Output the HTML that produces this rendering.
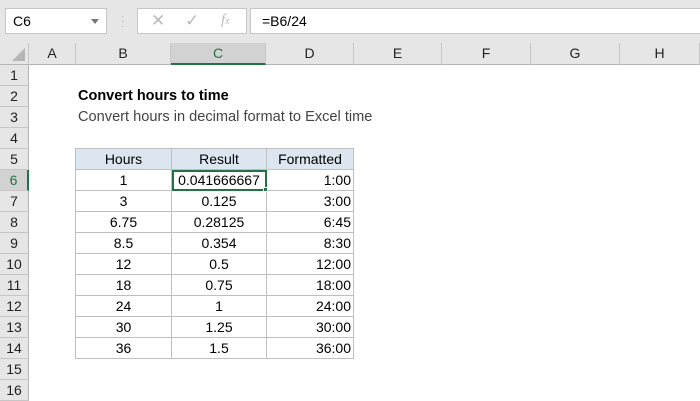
<!DOCTYPE html>
<html><head><style>
*{margin:0;padding:0;box-sizing:border-box}
body{width:700px;height:400px;overflow:hidden;background:#fff;font-family:"Liberation Sans",sans-serif;font-size:13px;color:#000;position:relative}
.tb{position:absolute;left:0;top:0;width:700px;height:43px;background:#e6e6e6}
.box{position:absolute;background:#fff;border:1px solid #c6c6c6}
.ch{position:absolute;top:43px;height:22px;background:#e6e6e6;border-right:1px solid #c6c6c6;border-bottom:1px solid #b5b5b5;text-align:center;line-height:21px;font-size:14px;color:#222}
.rh{position:absolute;left:0;width:29px;height:21px;background:#e6e6e6;border-bottom:1px solid #c6c6c6;border-right:1px solid #b5b5b5;text-align:center;line-height:21px;font-size:14px;color:#222}
table{position:absolute;left:75px;top:148px;border-collapse:collapse}
td{border:1px solid #bfbfbf;height:21px;padding:0 2px;font-size:14px;line-height:19px;text-align:center}
td.r{text-align:right}
tr.h td{background:#dce6f1}
</style></head><body>
<div class="tb">
<div class="box" style="left:5px;top:8px;width:102px;height:26px;padding:4px 0 0 7px;font-size:14px">C6<span style="position:absolute;right:7px;top:10px;border:4px solid transparent;border-top:5px solid #777"></span></div>
<div style="position:absolute;left:121px;top:14px;color:#aaa;font-size:10px;line-height:5px">·<br>·<br>·</div>
<div class="box" style="left:137px;top:8px;width:110px;height:26px;color:#bbb;font-size:17px">
<span style="position:absolute;left:13px;top:2px">✕</span><span style="position:absolute;left:47px;top:2px">✓</span><span style="position:absolute;left:83px;top:3px;font-family:'Liberation Serif',serif;font-style:italic;font-size:15px">f<small style="font-size:10px">x</small></span></div>
<div class="box" style="left:250px;top:8px;width:460px;height:26px;padding:4px 0 0 11px;font-size:14px">=B6/24</div>
</div>
<div class="ch" style="left:0;width:29px"><span style="position:absolute;right:3px;bottom:3px;border:6px solid transparent;border-right-color:#b5b5b5;border-bottom-color:#b5b5b5;border-width:0 0 13px 13px"></span></div>
<div class="ch" style="left:29px;width:47px">A</div>
<div class="ch" style="left:76px;width:95px">B</div>
<div class="ch" style="left:171px;width:95px;background:#d2d2d2;border-bottom:2px solid #217346;color:#217346">C</div>
<div class="ch" style="left:266px;width:88px">D</div>
<div class="ch" style="left:354px;width:88px">E</div>
<div class="ch" style="left:442px;width:89px">F</div>
<div class="ch" style="left:531px;width:89px">G</div>
<div class="ch" style="left:620px;width:80px">H</div>
<div class="rh" style="top:65px">1</div><div class="rh" style="top:86px">2</div><div class="rh" style="top:107px">3</div><div class="rh" style="top:128px">4</div><div class="rh" style="top:149px">5</div>
<div class="rh" style="top:170px;background:#d2d2d2;border-right:2px solid #217346;color:#217346">6</div>
<div class="rh" style="top:191px">7</div><div class="rh" style="top:212px">8</div><div class="rh" style="top:233px">9</div><div class="rh" style="top:254px">10</div><div class="rh" style="top:275px">11</div><div class="rh" style="top:296px">12</div><div class="rh" style="top:317px">13</div><div class="rh" style="top:338px">14</div><div class="rh" style="top:359px">15</div><div class="rh" style="top:380px">16</div>
<div style="position:absolute;left:78px;top:88px;font-weight:bold;font-size:14.5px">Convert hours to time</div>
<div style="position:absolute;left:78px;top:109px;font-size:14.6px;color:#444">Convert hours in decimal format to Excel time</div>
<table>
<tr class="h"><td style="width:96px">Hours</td><td style="width:95px">Result</td><td style="width:87px">Formatted</td></tr>
<tr><td>1</td><td style="outline:2px solid #217346;outline-offset:-2px">0.041666667</td><td class="r">1:00</td></tr>
<tr><td>3</td><td>0.125</td><td class="r">3:00</td></tr>
<tr><td>6.75</td><td>0.28125</td><td class="r">6:45</td></tr>
<tr><td>8.5</td><td>0.354</td><td class="r">8:30</td></tr>
<tr><td>12</td><td>0.5</td><td class="r">12:00</td></tr>
<tr><td>18</td><td>0.75</td><td class="r">18:00</td></tr>
<tr><td>24</td><td>1</td><td class="r">24:00</td></tr>
<tr><td>30</td><td>1.25</td><td class="r">30:00</td></tr>
<tr><td>36</td><td>1.5</td><td class="r">36:00</td></tr>
</table>
<div style="position:absolute;left:263px;top:187px;width:5px;height:5px;background:#217346;border:1px solid #fff"></div>
</body></html>
